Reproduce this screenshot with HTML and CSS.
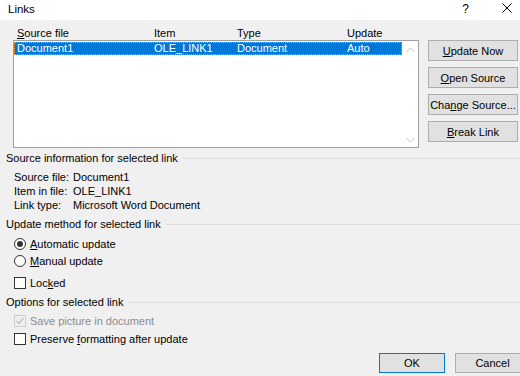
FILE: index.html
```html
<!DOCTYPE html>
<html>
<head>
<meta charset="utf-8">
<title>Links</title>
<link rel="stylesheet" href="styles.css">
</head>
<body>
<div class="dialog">
  <div class="titlebar">
    <span class="title">Links</span>
    <span class="help">?</span>
    <svg class="close" width="10" height="10" viewBox="0 0 10 10"><path d="M0.5 0.5 L9.5 9.5 M9.5 0.5 L0.5 9.5" stroke="#000" stroke-width="1" fill="none"/></svg>
  </div>
  <div class="content">
    <div class="top">
      <div class="listcol">
        <div class="cols hdr"><span><u>S</u>ource file</span><span>Item</span><span>Type</span><span>Update</span></div>
        <div class="listbox">
          <div class="rows">
            <div class="cols row sel"><span>Document1</span><span>OLE_LINK1</span><span>Document</span><span>Auto</span></div>
          </div>
          <div class="scrollbar">
            <svg width="9" height="6" viewBox="0 0 9 6"><path d="M0.5 5 L4.5 1 L8.5 5" stroke="#c2c2c2" fill="none"/></svg>
            <svg width="9" height="6" viewBox="0 0 9 6"><path d="M0.5 1 L4.5 5 L8.5 1" stroke="#c2c2c2" fill="none"/></svg>
          </div>
        </div>
      </div>
      <div class="btns">
        <div class="btn"><u>U</u>pdate Now</div>
        <div class="btn"><u>O</u>pen Source</div>
        <div class="btn">Cha<u>n</u>ge Source...</div>
        <div class="btn"><u>B</u>reak Link</div>
      </div>
    </div>

    <div class="heading heading-first"><span>Source information for selected link</span></div>
    <div class="info">
      <div class="inforow"><span class="lbl">Source file:</span><span>Document1</span></div>
      <div class="inforow"><span class="lbl">Item in file:</span><span>OLE_LINK1</span></div>
      <div class="inforow"><span class="lbl">Link type:</span><span>Microsoft Word Document</span></div>
    </div>

    <div class="heading"><span>Update method for selected link</span></div>
    <div class="radios">
      <div class="opt"><span class="radio on"></span><span><u>A</u>utomatic update</span></div>
      <div class="opt"><span class="radio"></span><span><u>M</u>anual update</span></div>
    </div>
    <div class="opt locked"><span class="check"></span><span>Loc<u>k</u>ed</span></div>

    <div class="heading heading-opts"><span>Options for selected link</span></div>
    <div class="checks">
      <div class="opt2 disabled"><span class="check dis"><svg width="10" height="10" viewBox="0 0 10 10"><path d="M1.5 5 L4 7.5 L8.5 2" stroke="#bfbfbf" stroke-width="1.2" fill="none"/></svg></span><span>Save picture in document</span></div>
      <div class="opt2"><span class="check"></span><span>Preserve <u>f</u>ormatting after update</span></div>
    </div>

    <div class="footer">
      <div class="btn ok">OK</div>
      <div class="btn cancel">Cancel</div>
    </div>
  </div>
</div>
</body>
</html>
```

FILE: styles.css
```css
html, body {
  margin: 0;
  padding: 0;
}
body {
  width: 520px;
  height: 376px;
  overflow: hidden;
  background: #f0f0f0;
  font-family: "Liberation Sans", Arial, sans-serif;
  font-size: 11px;
  color: #000;
}
u { text-decoration: underline; text-underline-offset: 1px; }

.titlebar {
  height: 20px;
  background: #fff;
  display: flex;
  align-items: center;
}
.title {
  margin-left: 8px;
  line-height: 14px;
  margin-top: -2px;
  font-size: 11.5px;
}
.help {
  margin-left: auto;
  margin-right: 33px;
  margin-top: -2px;
  font-size: 12px;
}
.close {
  margin-right: 8px;
  margin-top: -4px;
}

.content {
  display: flex;
  flex-direction: column;
}
.top {
  display: flex;
  margin-top: 6px;
}
.listcol {
  margin-left: 13px;
  width: 406px;
  flex: none;
  display: flex;
  flex-direction: column;
}
.cols {
  display: grid;
  grid-template-columns: 137px 83px 110px 1fr;
  line-height: 14px;
  white-space: nowrap;
}
.hdr {
  padding-left: 4px;
}
.listbox {
  height: 108px;
  box-sizing: border-box;
  border: 1px solid #a0a0a0;
  background: #fff;
  display: flex;
}
.rows {
  flex: 1;
  padding-top: 1px;
}
.row {
  height: 13px;
  line-height: 13px;
  padding-left: 3px;
  box-sizing: border-box;
}
.sel {
  background: #0078d7;
  color: #fff;
  outline: 1px dotted #f0a040;
  outline-offset: -1px;
}
.scrollbar {
  width: 16px;
  background: #fff;
  display: flex;
  flex-direction: column;
  justify-content: space-between;
  align-items: center;
  padding: 6px 0 4px;
  box-sizing: border-box;
}

.btns {
  margin-left: 9px;
  margin-top: 14px;
  display: flex;
  flex-direction: column;
  gap: 6px;
}
.btn {
  width: 90px;
  height: 21px;
  box-sizing: border-box;
  border: 1px solid #adadad;
  background: #e1e1e1;
  display: flex;
  align-items: center;
  justify-content: center;
  white-space: nowrap;
  flex: none;
}

.heading {
  display: flex;
  align-items: center;
  margin-top: 5px;
  line-height: 14px;
  padding-left: 6px;
  white-space: nowrap;
}
.heading::after {
  content: "";
  flex: 1;
  height: 1px;
  background: #dcdcdc;
  margin-left: 5px;
}
.heading-first { margin-top: 3px; }
.heading-opts { margin-top: 4px; }

.info {
  margin-top: 5px;
  padding-left: 14px;
}
.inforow {
  display: flex;
  line-height: 14px;
  white-space: nowrap;
}
.lbl { width: 59px; flex: none; }

.radios {
  margin-top: 4px;
}
.opt {
  display: flex;
  align-items: center;
  height: 17px;
  padding-left: 14px;
  gap: 4px;
  white-space: nowrap;
}
.locked { margin-top: 5px; }
.radio {
  width: 12px;
  height: 12px;
  border: 1px solid #333;
  border-radius: 50%;
  box-sizing: border-box;
  background: #fff;
  display: flex;
  align-items: center;
  justify-content: center;
  flex: none;
}
.radio.on::after {
  content: "";
  width: 6px;
  height: 6px;
  border-radius: 50%;
  background: #333;
}
.check {
  width: 12px;
  height: 12px;
  border: 1px solid #333;
  box-sizing: border-box;
  background: #fff;
  display: flex;
  align-items: center;
  justify-content: center;
  flex: none;
}
.check.dis {
  border-color: #cccccc;
  background: #f0f0f0;
}
.checks { margin-top: 3px; }
.opt2 {
  display: flex;
  align-items: center;
  height: 18px;
  padding-left: 14px;
  gap: 4px;
  white-space: nowrap;
}
.disabled { color: #8d8d8d; }

.footer {
  display: flex;
  margin-top: 5px;
  padding-left: 379px;
  gap: 10px;
}
.ok {
  width: 66px;
  height: 20px;
  border: 1px solid #0078d7;
}
.cancel {
  width: 75px;
  height: 20px;
}
```
